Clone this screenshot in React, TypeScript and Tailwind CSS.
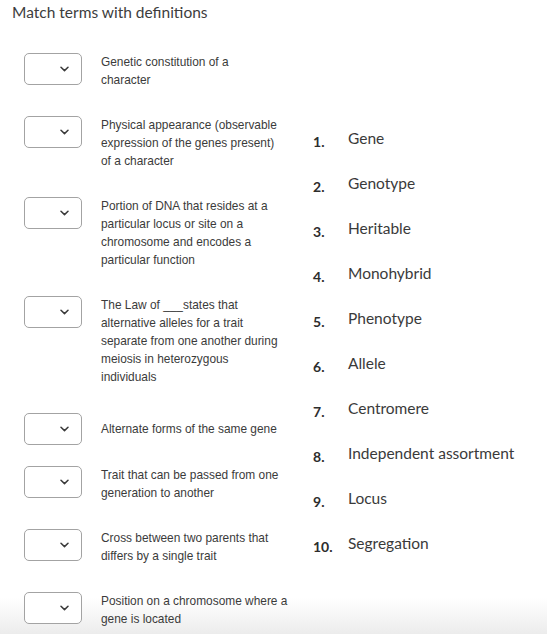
import React from 'react';

// line breaks are kept as in the original so the wrapping matches
const DEFS = [
  { lines: ['Genetic constitution of a', 'character'], gap: 'mt-[30px]', align: 'items-start' },
  { lines: ['Physical appearance (observable', 'expression of the genes present)', 'of a character'], gap: 'mt-[27px]', align: 'items-start' },
  { lines: ['Portion of DNA that resides at a', 'particular locus or site on a', 'chromosome and encodes a', 'particular function'], gap: 'mt-[27px]', align: 'items-start' },
  { lines: ['The Law of ___states that', 'alternative alleles for a trait', 'separate from one another during', 'meiosis in heterozygous', 'individuals'], gap: 'mt-[27px]', align: 'items-start' },
  { lines: ['Alternate forms of the same gene'], gap: 'mt-[27px]', align: 'items-center' },
  { lines: ['Trait that can be passed from one', 'generation to another'], gap: 'mt-[21px]', align: 'items-start' },
  { lines: ['Cross between two parents that', 'differs by a single trait'], gap: 'mt-[27px]', align: 'items-start' },
  { lines: ['Position on a chromosome where a', 'gene is located'], gap: 'mt-[27px]', align: 'items-start' },
];

const TERMS = [
  'Gene',
  'Genotype',
  'Heritable',
  'Monohybrid',
  'Phenotype',
  'Allele',
  'Centromere',
  'Independent assortment',
  'Locus',
  'Segregation',
];

function SelectBox() {
  return (
    <div className="shrink-0 w-[58px] h-[32px] rounded-[5px] border border-[#a3a3a3] bg-white flex items-center justify-end pr-[12px]">
      <svg width="9" height="6" viewBox="0 0 9 6" fill="none">
        <path d="M1 1.2 L4.5 4.6 L8 1.2" stroke="#3a3a3a" strokeWidth="1.5" strokeLinecap="round" strokeLinejoin="round" />
      </svg>
    </div>
  );
}

export default function App() {
  return (
    <div className="w-[547px] h-[634px] overflow-hidden text-[#333] bg-[linear-gradient(180deg,#ffffff_0px,#ffffff_598px,#ececec_634px)]">
      <h1 className="pl-3 pt-[2px] h-[23px] text-[15.5px] leading-[20px] text-[#3d3d3d]" style={{ fontFamily: 'Lato, "Noto Sans", sans-serif' }}>
        Match terms with definitions
      </h1>

      <div className="flex">
        {/* definitions with dropdowns */}
        <div className="flex flex-col pl-6 w-[313px]">
          {DEFS.map((d, i) => (
            <div key={i} className={`flex gap-[19px] ${d.gap} ${d.align}`}>
              <SelectBox />
              <p
                className="whitespace-nowrap text-[11.9px] leading-[18px] text-[#3b3b3b]"
                style={{ fontFamily: '"Liberation Sans", Arial, sans-serif' }}
              >
                {d.lines.map((l, j) => (
                  <span key={j} className="block">{l}</span>
                ))}
              </p>
            </div>
          ))}
        </div>

        {/* numbered terms */}
        <div className="flex flex-col pt-[105px]" style={{ fontFamily: 'Lato, "Noto Sans", sans-serif' }}>
          {TERMS.map((t, i) => (
            <div key={t} className="flex items-start h-[45px]">
              <span className="w-[35px] pt-[4px] text-[14px] leading-[20px] font-bold text-[#2d2d2d]">{i + 1}.</span>
              <span className="text-[15.5px] leading-[20px] text-[#3a3a3a]">{t}</span>
            </div>
          ))}
        </div>
      </div>
    </div>
  );
}
